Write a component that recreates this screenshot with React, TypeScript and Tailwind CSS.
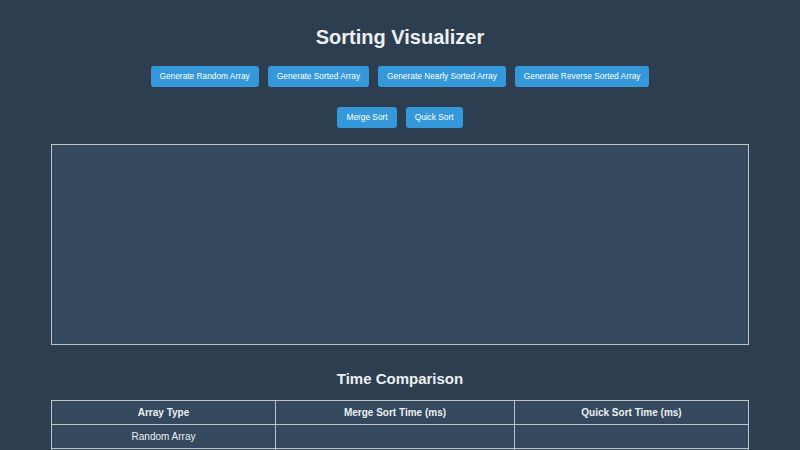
const arrayButtons = [
  "Generate Random Array",
  "Generate Sorted Array",
  "Generate Nearly Sorted Array",
  "Generate Reverse Sorted Array",
];

const sortButtons = ["Merge Sort", "Quick Sort"];

const rows = ["Random Array", "Sorted Array", "Nearly Sorted Array", "Reverse Sorted Array"];

function Button({ label }: { label: string }) {
  return (
    <button className="h-[21px] px-[9px] rounded-[3px] bg-[#3498db] text-white text-[8.33px] leading-none flex items-center">
      {label}
    </button>
  );
}

export default function App() {
  return (
    <div
      className="min-h-screen w-full bg-[#2c3e50] text-[#ecf0f1] px-[51px] pt-[26px] pb-10"
      style={{ fontFamily: '"Liberation Sans", Arial, sans-serif' }}
    >
      <h1 className="text-[20px] font-bold text-center leading-[23px]">Sorting Visualizer</h1>

      <div className="flex justify-center gap-[9px] mt-[17px]">
        {arrayButtons.map((b) => (
          <Button key={b} label={b} />
        ))}
      </div>

      <div className="flex justify-center gap-[9px] mt-[20px]">
        {sortButtons.map((b) => (
          <Button key={b} label={b} />
        ))}
      </div>

      <div className="mt-[16px] h-[201px] w-full border border-[#bdc3c7] bg-[#34495e]"></div>

      <h2 className="mt-[25px] text-[15px] font-bold text-center leading-[17px]">Time Comparison</h2>

      <table className="mt-[13px] w-full border-collapse text-[10px]">
        <thead>
          <tr className="bg-[#34495e]">
            <th className="h-[24px] border border-[#bdc3c7] font-bold w-[224px]">Array Type</th>
            <th className="h-[24px] border border-[#bdc3c7] font-bold w-[239px]">Merge Sort Time (ms)</th>
            <th className="h-[24px] border border-[#bdc3c7] font-bold">Quick Sort Time (ms)</th>
          </tr>
        </thead>
        <tbody>
          {rows.map((r) => (
            <tr key={r} className="bg-[#34495e]">
              <td className="h-[24px] border border-[#bdc3c7] text-center">{r}</td>
              <td className="h-[24px] border border-[#bdc3c7]"></td>
              <td className="h-[24px] border border-[#bdc3c7]"></td>
            </tr>
          ))}
        </tbody>
      </table>
    </div>
  );
}
